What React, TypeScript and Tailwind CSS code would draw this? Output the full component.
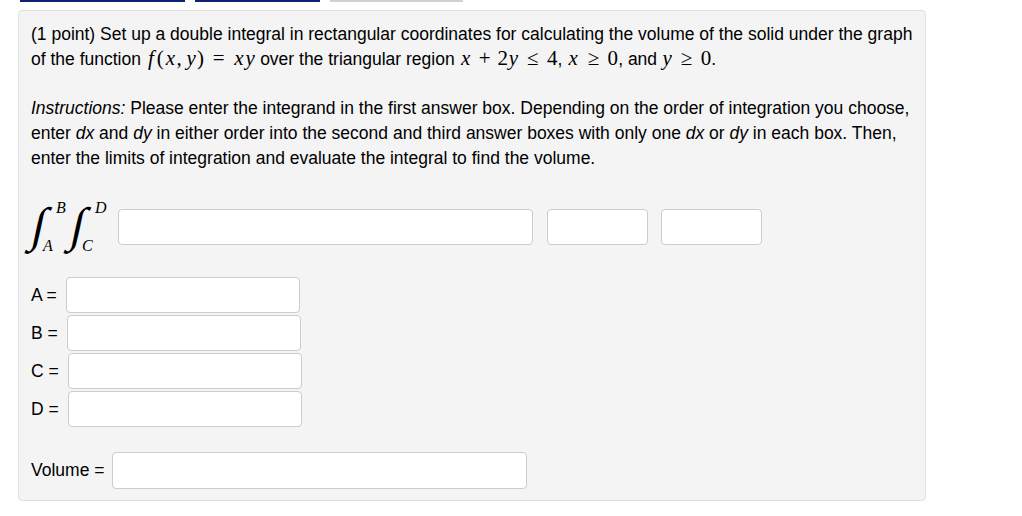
import React from 'react';

// widths follow the usual TeX math metrics at ~21px
const W = {
  f: 'w-[10.4px]',
  x: 'w-[12.1px]',
  y: 'w-[10.4px]',
  paren: 'w-[8.2px]',
  comma: 'w-[9.4px]',
  rel: 'w-[28.3px]',
  bin: 'w-[25.9px]',
  digit: 'w-[10.6px]',
};

function G({ w, italic, children }: { w: string; italic?: boolean; children: React.ReactNode }) {
  return <span className={`inline-block text-center ${w} ${italic ? 'italic' : ''}`}>{children}</span>;
}

function M({ children }: { children: React.ReactNode }) {
  return <span className="text-[21px] leading-none font-['Liberation_Serif',serif]">{children}</span>;
}

function Box({ className }: { className: string }) {
  return <div className={`h-[36px] bg-white border border-[#cccccc] rounded-[4px] ${className}`} />;
}

function Integral({ lower, upper }: { lower: string; upper: string }) {
  return (
    <div className="relative w-[39px] h-[54px] font-['Liberation_Serif',serif] italic">
      <span className="absolute left-[2px] top-[1px] text-[48px] leading-[48px] -skew-x-[12deg]">∫</span>
      <span className="absolute left-[25px] top-0 text-[16px] leading-none">{upper}</span>
      <span className="absolute left-[12px] bottom-0 text-[16px] leading-none">{lower}</span>
    </div>
  );
}

function LimitRow({ label }: { label: string }) {
  return (
    <div className="flex items-center">
      <span>{label}</span>
      <Box className="w-[234px] ml-[9px]" />
    </div>
  );
}

export default function App() {
  return (
    <div className="min-h-screen bg-white text-black text-[17.5px] font-['Liberation_Sans',Arial,sans-serif]">
      {/* tab edges scrolled off above */}
      <div className="flex h-[2px]">
        <div className="ml-[20px] w-[165px] bg-[#0e2077]" />
        <div className="ml-[10px] w-[125px] bg-[#0e2077]" />
        <div className="ml-[10px] w-[133px] bg-[#d0d0d0]" />
      </div>

      <div className="ml-[18px] mt-[8px] w-[908px] bg-[#f4f4f4] border border-[#e0e0e0] rounded-[4px] px-[12px] pt-[11px] pb-[11px] leading-[25px] whitespace-nowrap">
        <p>
          (1 point) Set up a double integral in rectangular coordinates for calculating the volume of the solid under the graph
          <br />
          of the function{' '}
          <M>
            <G w={W.f} italic>f</G>
            <G w={W.paren}>(</G>
            <G w={W.x} italic>x</G>
            <span className={`inline-block text-left ${W.comma}`}>,</span>
            <G w={W.y} italic>y</G>
            <G w={W.paren}>)</G>
            <G w={W.rel}>=</G>
            <G w={W.x} italic>x</G>
            <G w={W.y} italic>y</G>
          </M>{' '}
          over the triangular region{' '}
          <M>
            <G w={W.x} italic>x</G>
            <G w={W.bin}>+</G>
            <G w={W.digit}>2</G>
            <G w={W.y} italic>y</G>
            <G w={W.rel}>≤</G>
            <G w={W.digit}>4</G>
          </M>
          ,{' '}
          <M>
            <G w={W.x} italic>x</G>
            <G w={W.rel}>≥</G>
            <G w={W.digit}>0</G>
          </M>
          , and{' '}
          <M>
            <G w={W.y} italic>y</G>
            <G w={W.rel}>≥</G>
            <G w={W.digit}>0</G>
          </M>
          .
        </p>

        <p className="mt-[24px]">
          <i>Instructions:</i> Please enter the integrand in the first answer box. Depending on the order of integration you choose,
          <br />
          enter <i>dx</i> and <i>dy</i> in either order into the second and third answer boxes with only one <i>dx</i> or <i>dy</i> in each box. Then,
          <br />
          enter the limits of integration and evaluate the integral to find the volume.
        </p>

        <div className="mt-[29px] flex items-center">
          <Integral lower="A" upper="B" />
          <Integral lower="C" upper="D" />
          <Box className="ml-[9px] w-[415px]" />
          <Box className="ml-[14px] w-[101px]" />
          <Box className="ml-[13px] w-[101px]" />
        </div>

        <div className="mt-[23px] flex flex-col gap-[2px]">
          <LimitRow label="A =" />
          <LimitRow label="B =" />
          <LimitRow label="C =" />
          <LimitRow label="D =" />
        </div>

        <div className="mt-[25px] flex items-center">
          <span>Volume =</span>
          <Box className="ml-[8px] w-[415px] h-[37px]" />
        </div>
      </div>
    </div>
  );
}
